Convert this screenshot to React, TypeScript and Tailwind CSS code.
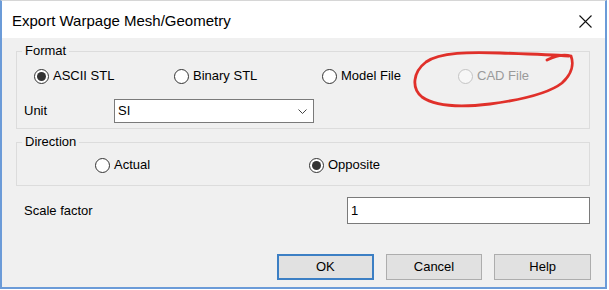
import React from "react";

function Radio({ label, checked = false, disabled = false }: { label: string; checked?: boolean; disabled?: boolean }) {
  return (
    <div className="flex items-center">
      <span
        className={`flex h-[15px] w-[15px] items-center justify-center rounded-full border ${
          disabled ? "border-[#c4c4c4] bg-[#f7f7f7]" : "border-[#333333] bg-white"
        }`}
      >
        {checked && <span className="h-[9px] w-[9px] rounded-full bg-[#333333]" />}
      </span>
      <span className={`ml-[4px] text-[13px] leading-[16px] ${disabled ? "text-[#9a9a9a]" : "text-black"}`}>{label}</span>
    </div>
  );
}

function Group({ title, children, className = "" }: { title: string; children: React.ReactNode; className?: string }) {
  return (
    <div className={`w-[574px] border border-[#dcdcdc] ${className}`}>
      <div className="-mt-[9px] ml-[5px] w-fit bg-[#f0f0f0] px-[3px] text-[13px] leading-[16px] text-black">{title}</div>
      {children}
    </div>
  );
}

export default function App() {
  return (
    <div className="relative flex h-[289px] w-[607px] flex-col border-x-2 border-b-2 border-t border-[#6b9bd8] border-t-[#d6d6d6] font-['Liberation_Sans',Arial,sans-serif]">
      <div className="flex h-[37px] items-center justify-between bg-white pl-[10px] pr-[12px] pt-[3px]">
        <span className="text-[15px] leading-[18px] text-black">Export Warpage Mesh/Geometry</span>
        <svg width="13" height="13" viewBox="0 0 13 13" className="mr-[1px]">
          <path d="M0.5 0.5 L12.5 12.5 M12.5 0.5 L0.5 12.5" stroke="#111" strokeWidth="1.1" />
        </svg>
      </div>

      <div className="flex flex-1 flex-col bg-[#f0f0f0] px-[14px]">
        <Group title="Format" className="mt-[13px] pb-[5px]">
          <div className="mt-[9px] flex pl-[17px]">
            <div className="w-[140px]">
              <Radio label="ASCII STL" checked />
            </div>
            <div className="w-[148px]">
              <Radio label="Binary STL" />
            </div>
            <div className="w-[136px]">
              <Radio label="Model File" />
            </div>
            <Radio label="CAD File" disabled />
          </div>
          <div className="mt-[15px] flex items-center pl-[7px]">
            <span className="w-[90px] text-[13px] leading-[16px] text-black">Unit</span>
            <div className="flex h-[24px] w-[200px] items-center justify-between border border-[#7a7a7a] bg-white pl-[3px] pr-[6px]">
              <span className="text-[13px] leading-[16px] text-black">SI</span>
              <svg width="9" height="5" viewBox="0 0 9 5">
                <path d="M0.5 0.5 L4.5 4.5 L8.5 0.5" fill="none" stroke="#444" strokeWidth="1" />
              </svg>
            </div>
          </div>
        </Group>

        <Group title="Direction" className="mt-[13px] pb-[12px]">
          <div className="mt-[7px] flex pl-[78px]">
            <div className="w-[214px]">
              <Radio label="Actual" />
            </div>
            <Radio label="Opposite" checked />
          </div>
        </Group>

        <div className="mt-[11px] flex items-center pl-[8px]">
          <span className="w-[323px] text-[13px] leading-[16px] text-black">Scale factor</span>
          <div className="flex h-[27px] w-[243px] items-center border border-[#7a7a7a] bg-white pl-[3px] text-[13px] leading-[16px] text-black">
            1
          </div>
        </div>

        <div className="mt-[30px] flex gap-[12px] pl-[261px]">
          <button className="h-[26px] w-[97px] border-2 border-[#3c7fc4] bg-[#e1e1e1] text-[13px] text-black">OK</button>
          <button className="h-[26px] w-[97px] border border-[#adadad] bg-[#e1e1e1] text-[13px] text-black">Cancel</button>
          <button className="h-[26px] w-[97px] border border-[#adadad] bg-[#e1e1e1] text-[13px] text-black">Help</button>
        </div>
      </div>

      <svg className="pointer-events-none absolute left-[-2px] top-[-1px]" width="609" height="290" viewBox="0 0 609 290">
        <path
          d="M547 60 C555 56 564 54 571 56 C574 64 572 74 562 83 C548 94 520 100 490 104 C465 107 436 107 422 97 C411 88 413 72 426 62 C440 52 470 52 500 53 C530 54 555 55 569 56"
          fill="none"
          stroke="#e0302a"
          strokeWidth="2.8"
          strokeLinecap="round"
        />
      </svg>
    </div>
  );
}
